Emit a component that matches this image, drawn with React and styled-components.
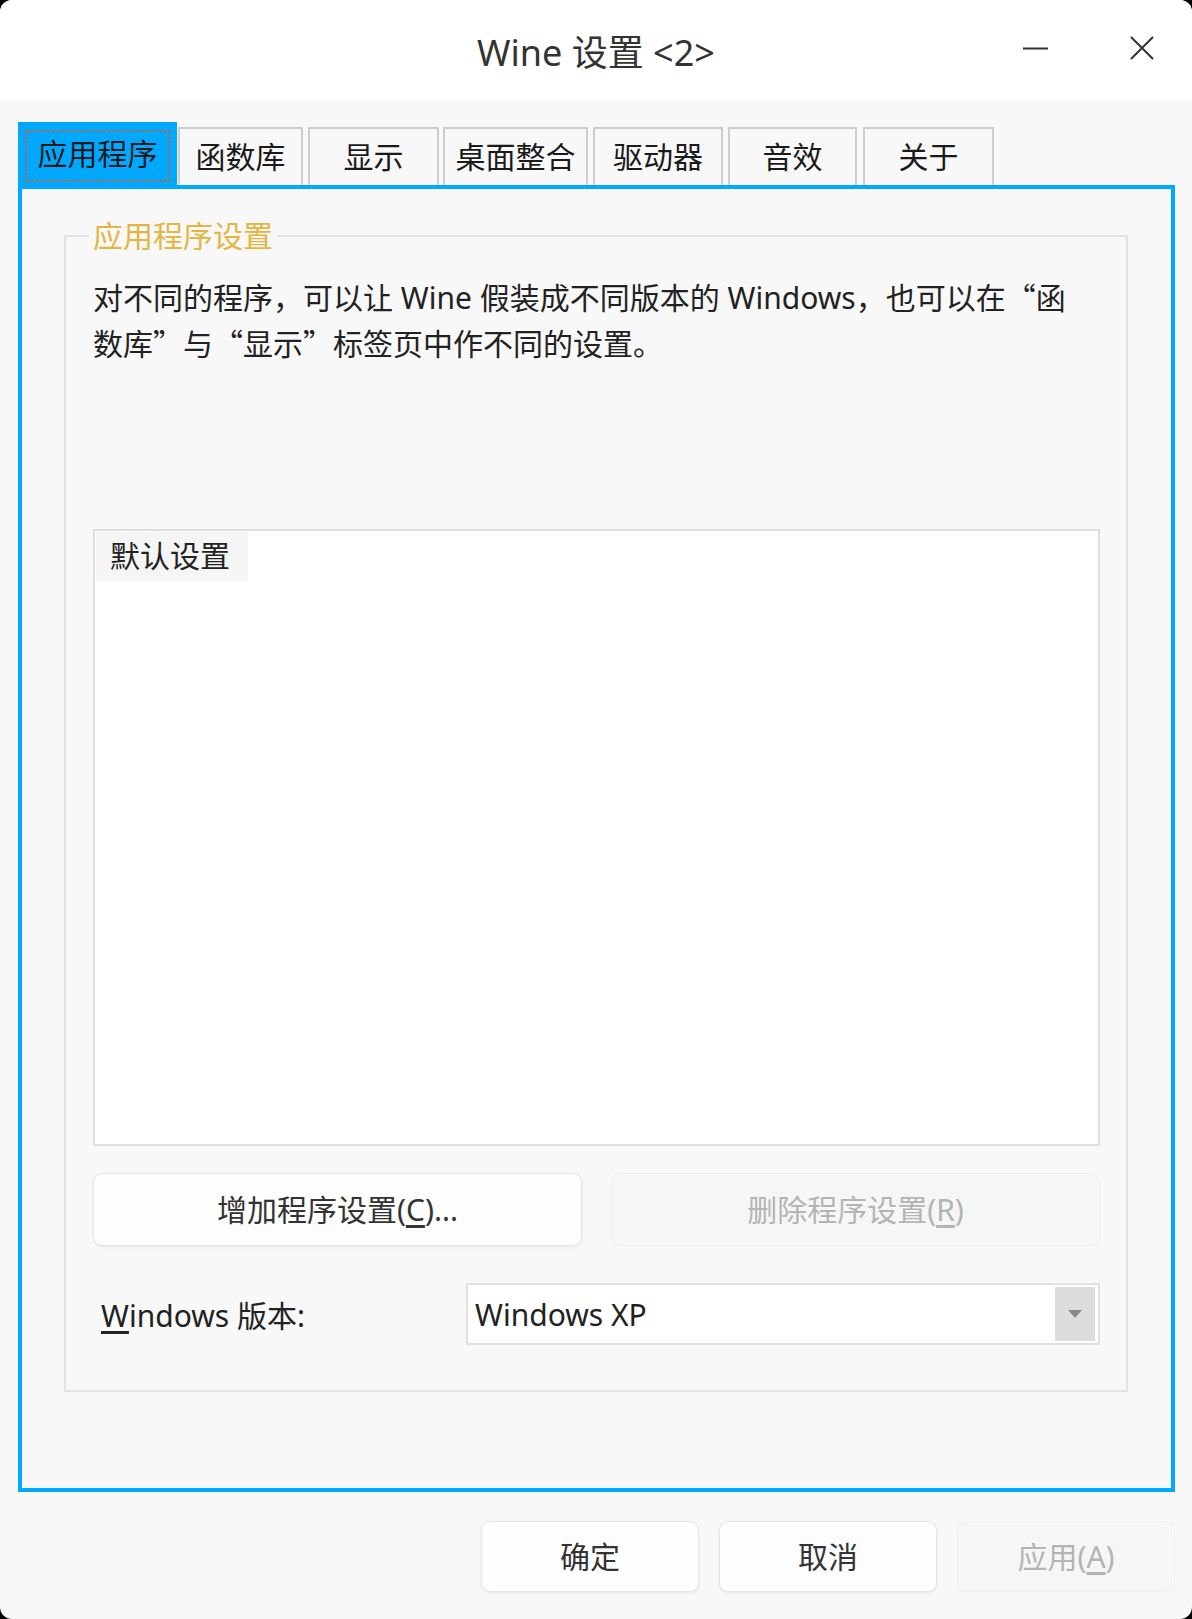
import React from "react";
import styled, { createGlobalStyle } from "styled-components";

const GlobalStyle = createGlobalStyle`
  html, body {
    margin: 0;
    padding: 0;
    background: #000;
  }
  body {
    font-family: "Noto Sans", "Noto Sans CJK SC", sans-serif;
  }
`;

const tabs = [
  { name: "应用程序", w: 159, gap: 0, active: true },
  { name: "函数库", w: 125, gap: 1 },
  { name: "显示", w: 131, gap: 5 },
  { name: "桌面整合", w: 145, gap: 4 },
  { name: "驱动器", w: 130, gap: 5 },
  { name: "音效", w: 129, gap: 5 },
  { name: "关于", w: 131, gap: 6 },
];

const App = () => {
  return (
    <>
      <GlobalStyle />
      <Window>
        <TitleBar>
          <Title>Wine 设置 &lt;2&gt;</Title>
          <Controls>
            <svg width="25" height="25" viewBox="0 0 25 25">
              <line x1="0" y1="12.5" x2="25" y2="12.5" stroke="#333" strokeWidth="2" />
            </svg>
            <svg width="24" height="24" viewBox="0 0 24 24">
              <path d="M1 1 L23 23 M23 1 L1 23" stroke="#333" strokeWidth="2" fill="none" />
            </svg>
          </Controls>
        </TitleBar>

        <Body>
          <TabStrip>
            {tabs.map(({ name, w, gap, active }) => (
              <Tab key={name} $w={w} $gap={gap} $active={active}>
                {name}
              </Tab>
            ))}
          </TabStrip>

          <Frame>
            <Group>
              <Legend>应用程序设置</Legend>
              <Description>
                对不同的程序，可以让 Wine 假装成不同版本的 Windows，也可以在<Q>“</Q>函
                <br />
                数库<Q>”</Q>与<Q>“</Q>显示<Q>”</Q>标签页中作不同的设置。
              </Description>
              <AppList>
                <ListItem>默认设置</ListItem>
              </AppList>
              <ButtonRow>
                <Button>
                  增加程序设置(<u>C</u>)...
                </Button>
                <Button disabled>
                  删除程序设置(<u>R</u>)
                </Button>
              </ButtonRow>
              <VersionRow>
                <Label>
                  <u>W</u>indows 版本:
                </Label>
                <Combo>
                  <ComboText>Windows XP</ComboText>
                  <DropButton>
                    <svg width="14" height="8" viewBox="0 0 14 8">
                      <path d="M0 0 L14 0 L7 8 Z" fill="#8a8a8a" />
                    </svg>
                  </DropButton>
                </Combo>
              </VersionRow>
            </Group>
          </Frame>
        </Body>

        <Footer>
          <DialogButton>确定</DialogButton>
          <DialogButton>取消</DialogButton>
          <DialogButton disabled>
            应用(<u>A</u>)
          </DialogButton>
        </Footer>
      </Window>
    </>
  );
};

const Window = styled.div`
  width: 1192px;
  height: 1619px;
  box-sizing: border-box;
  background: #f8f8f8;
  border-radius: 12px;
  overflow: hidden;
  display: flex;
  flex-direction: column;
  color: #222;
`;

const TitleBar = styled.div`
  height: 100px;
  flex: none;
  background: #fff;
  display: grid;
  grid-template-columns: 1fr auto 1fr;
  align-items: center;
`;

const Title = styled.div`
  grid-column: 2;
  font-size: 36px;
  color: #333;
  margin-top: 1px;
`;

const Controls = styled.div`
  display: flex;
  justify-content: flex-end;
  align-items: center;
  gap: 82px;
  padding-right: 38px;
  margin-top: -4px;
  svg {
    display: block;
  }
`;

const Body = styled.div`
  flex: 1;
  display: flex;
  flex-direction: column;
  padding: 22px 17px 0 18px;
  min-height: 0;
`;

const TabStrip = styled.div`
  display: flex;
  align-items: flex-end;
  height: 63px;
  flex: none;
`;

const Tab = styled.div`
  box-sizing: border-box;
  position: relative;
  width: ${(p) => p.$w}px;
  height: ${(p) => (p.$active ? 63 : 58)}px;
  margin-left: ${(p) => p.$gap}px;
  padding-bottom: 5px;
  display: flex;
  align-items: center;
  justify-content: center;
  font-size: 30px;
  color: #1a1a1a;
  background: ${(p) => (p.$active ? "#00a8ff" : "#f8f8f8")};
  border: 2px solid ${(p) => (p.$active ? "#00a8ff" : "#cdcdcd")};
  border-bottom: none;

  &::after {
    content: "";
    display: ${(p) => (p.$active ? "block" : "none")};
    position: absolute;
    top: 6px;
    left: 5px;
    right: 5px;
    bottom: 3px;
    border: 2px dotted #c8602a;
  }
`;

const Frame = styled.div`
  flex: 1;
  display: flex;
  flex-direction: column;
  border: 4px solid #00a8ff;
  background: #f8f8f8;
  padding: 25px 43px 96px 42px;
  min-height: 0;
`;

const Group = styled.fieldset`
  flex: 1;
  display: flex;
  flex-direction: column;
  margin: 0;
  min-width: 0;
  min-height: 0;
  border: 2px solid #e3e3e3;
  padding: 0 26px 45px 27px;
`;

const Legend = styled.legend`
  font-size: 30px;
  line-height: 44px;
  color: #e4b640;
  padding: 0 4px;
  margin-left: -4px;
`;

const Q = styled.span`
  font-family: "Noto Sans CJK SC", sans-serif;
`;

const Description = styled.p`
  margin: 16px 0 0;
  height: 255px;
  flex: none;
  font-size: 30px;
  line-height: 45px;
  color: #222;
  white-space: nowrap;
`;

const AppList = styled.div`
  flex: 1;
  background: #fff;
  border: 2px solid #dedede;
  padding: 1px;
  min-height: 0;
`;

const ListItem = styled.div`
  width: 152px;
  height: 49px;
  box-sizing: border-box;
  padding: 0 0 6px 14px;
  display: flex;
  align-items: center;
  background: #f5f5f5;
  font-size: 30px;
  color: #222;
`;

const ButtonRow = styled.div`
  display: grid;
  grid-template-columns: 1fr 1fr;
  gap: 29px;
  margin-top: 27px;
  flex: none;
`;

const Button = styled.button`
  height: 73px;
  font-family: inherit;
  font-size: 30px;
  color: ${(p) => (p.disabled ? "#b4b4b4" : "#333")};
  background: ${(p) => (p.disabled ? "#f6f6f6" : "#fdfdfd")};
  border: 1px solid ${(p) => (p.disabled ? "#efefef" : "#e6e6e6")};
  border-radius: 9px;
  box-shadow: ${(p) => (p.disabled ? "none" : "0 1px 3px rgba(0, 0, 0, 0.08)")};
  padding: 0 0 4px;
  u {
    text-underline-offset: 4px;
  }
`;

const VersionRow = styled.div`
  display: grid;
  grid-template-columns: 373px 1fr;
  align-items: center;
  margin-top: 37px;
  flex: none;
`;

const Label = styled.div`
  font-size: 30px;
  color: #222;
  padding-left: 8px;
  u {
    text-underline-offset: 4px;
  }
`;

const Combo = styled.div`
  height: 62px;
  box-sizing: border-box;
  display: flex;
  align-items: center;
  background: #fff;
  border: 2px solid #e1e1e1;
  padding: 0 3px 0 7px;
`;

const ComboText = styled.div`
  flex: 1;
  font-size: 30px;
  color: #222;
`;

const DropButton = styled.div`
  width: 40px;
  height: 54px;
  display: flex;
  align-items: center;
  justify-content: center;
  background: #dddddd;
`;

const Footer = styled.div`
  flex: none;
  display: flex;
  justify-content: flex-end;
  gap: 20px;
  padding: 29px 17px 27px 0;
`;

const DialogButton = styled(Button)`
  width: 218px;
  height: 71px;
`;

export default App;
